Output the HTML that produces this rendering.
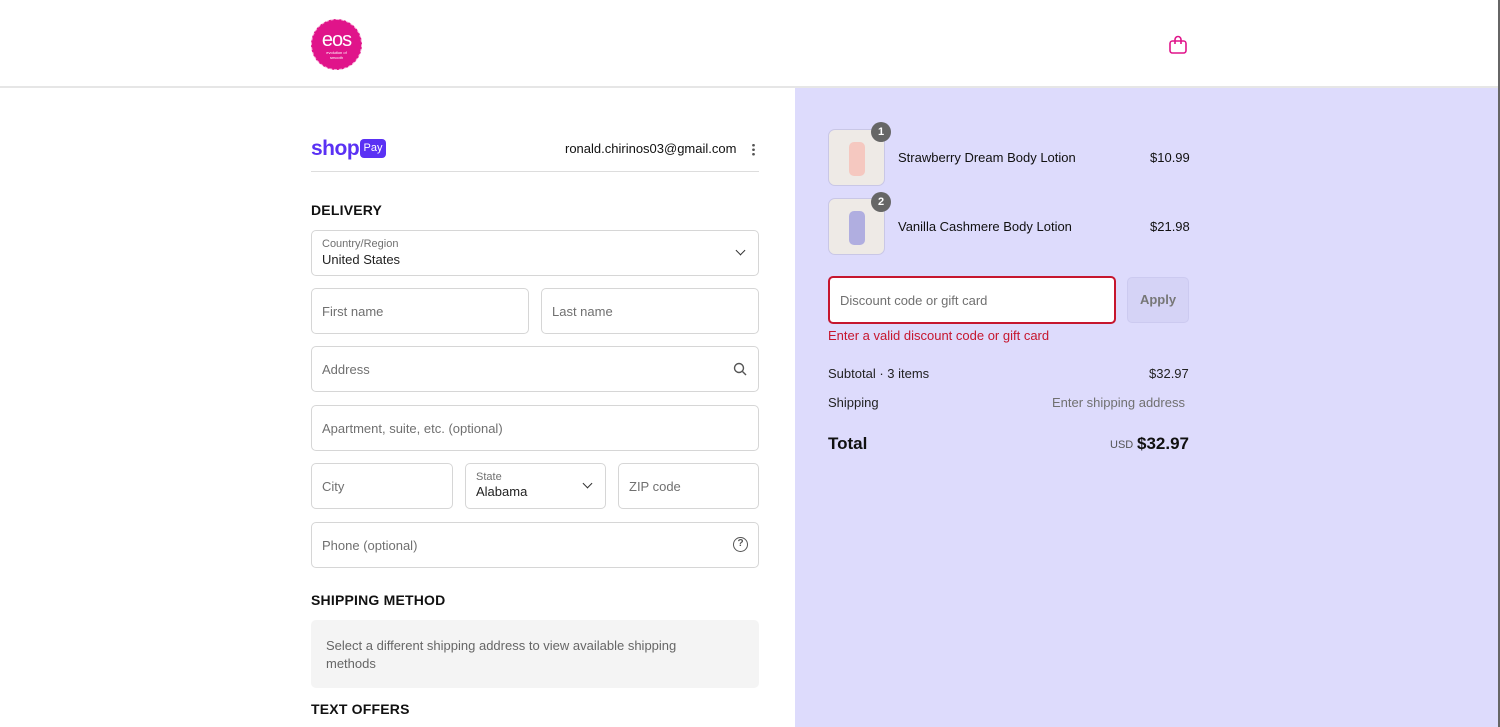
<!DOCTYPE html>
<html><head><style>
*{box-sizing:border-box;margin:0;padding:0}
body{width:1500px;height:727px;overflow:hidden;font-family:"Liberation Sans",sans-serif;color:#111;background:#fff;position:relative}
.hdr{position:absolute;left:0;top:0;width:1500px;height:88px;border-bottom:2px solid #e6e6e6;background:#fff}
.right{position:absolute;left:795px;top:88px;width:705px;height:639px;background:#dddbfc}
.a{position:absolute}
.f{position:absolute;border:1px solid #d6d6d6;border-radius:5px;background:#fff;font-size:13px;color:#707070;padding-left:10px;display:flex;align-items:center}
.lbl{font-size:11px;color:#707070}
.h{position:absolute;font-size:14px;font-weight:bold;letter-spacing:.2px}
.chev{position:absolute;width:7px;height:7px;border-right:1.5px solid #333;border-bottom:1.5px solid #333;transform:rotate(45deg)}
.t{font-size:13px;color:#222}
.thumb{position:absolute;width:57px;height:57px;border:1px solid #c9c7e6;border-radius:7px;background:#eeeae6}
.badge{position:absolute;width:20px;height:20px;border-radius:50%;background:#666;color:#fff;font-size:11px;font-weight:bold;text-align:center;line-height:20px}
</style></head><body>
<div class="hdr">
 <div class="a" style="left:311px;top:19px;width:51px;height:51px;border-radius:50%;background:#e0148a;color:#fff;text-align:center;border:1px dashed #f6a6d2">
  <div style="font-size:20px;line-height:20px;margin-top:10px;letter-spacing:-1px">eos</div>
  <div style="font-size:4px;line-height:5px">evolution of<br>smooth</div>
 </div>
 <svg class="a" style="left:1168px;top:34px" width="20" height="21" viewBox="0 0 20 21"><rect x="2" y="7" width="16" height="12" rx="2.5" fill="none" stroke="#e0148a" stroke-width="1.6"/><path d="M7 10V5.5a3 3 0 0 1 6 0V10" fill="none" stroke="#e0148a" stroke-width="1.6"/></svg>
</div>
<div class="right"></div>
<div class="a" style="left:1498px;top:0;width:2px;height:727px;background:#666"></div>

<div class="a" style="left:311px;top:137px;font-size:21px;font-weight:bold;color:#5a31f4;letter-spacing:-.5px">shop</div>
<div class="a" style="left:360px;top:139px;width:26px;height:19px;border-radius:4px;background:#5a31f4;color:#fff;font-size:11px;text-align:center;line-height:19px">Pay</div>
<div class="a t" style="left:565px;top:141px;color:#111">ronald.chirinos03@gmail.com</div>
<div class="a" style="left:752px;top:143px;width:3px;height:13px;background:radial-gradient(circle,#555 1.2px,transparent 1.5px) 0 0/3px 4.5px"></div>
<div class="a" style="left:311px;top:171px;width:448px;height:1px;background:#ddd"></div>

<div class="h" style="left:311px;top:202px">DELIVERY</div>
<div class="f" style="left:311px;top:230px;width:448px;height:46px;display:block;padding-top:7px"><div class="lbl">Country/Region</div><div class="t" style="margin-top:2px">United States</div></div>
<div class="chev" style="left:737px;top:247px"></div>
<div class="f" style="left:311px;top:288px;width:218px;height:46px">First name</div>
<div class="f" style="left:541px;top:288px;width:218px;height:46px">Last name</div>
<div class="f" style="left:311px;top:346px;width:448px;height:46px">Address</div>
<svg class="a" style="left:733px;top:362px" width="14" height="14" viewBox="0 0 14 14"><circle cx="6" cy="6" r="4.5" fill="none" stroke="#555" stroke-width="1.4"/><path d="M9.5 9.5L13 13" stroke="#555" stroke-width="1.4"/></svg>
<div class="f" style="left:311px;top:405px;width:448px;height:46px">Apartment, suite, etc. (optional)</div>
<div class="f" style="left:311px;top:463px;width:142px;height:46px">City</div>
<div class="f" style="left:465px;top:463px;width:141px;height:46px;display:block;padding-top:7px"><div class="lbl">State</div><div class="t" style="margin-top:1px">Alabama</div></div>
<div class="chev" style="left:584px;top:480px"></div>
<div class="f" style="left:618px;top:463px;width:141px;height:46px">ZIP code</div>
<div class="f" style="left:311px;top:522px;width:448px;height:46px">Phone (optional)</div>
<div class="a" style="left:733px;top:537px;width:15px;height:15px;border:1.4px solid #555;border-radius:50%;font-size:10px;text-align:center;line-height:12px;color:#555;font-weight:bold">?</div>

<div class="h" style="left:311px;top:592px">SHIPPING METHOD</div>
<div class="a" style="left:311px;top:620px;width:448px;height:68px;background:#f4f4f4;border-radius:5px;padding:17px 60px 17px 15px;font-size:13px;color:#666;line-height:18px">Select a different shipping address to view available shipping methods</div>
<div class="h" style="left:311px;top:701px">TEXT OFFERS</div>

<div class="thumb" style="left:828px;top:129px"><div style="margin:12px auto;width:16px;height:34px;border-radius:5px;background:#f5c8c0"></div></div>
<div class="badge" style="left:871px;top:122px">1</div>
<div class="a t" style="left:898px;top:150px;color:#111">Strawberry Dream Body Lotion</div>
<div class="a t" style="left:1150px;top:150px;color:#111">$10.99</div>
<div class="thumb" style="left:828px;top:198px"><div style="margin:12px auto;width:16px;height:34px;border-radius:5px;background:#b0aee0"></div></div>
<div class="badge" style="left:871px;top:192px">2</div>
<div class="a t" style="left:898px;top:219px;color:#111">Vanilla Cashmere Body Lotion</div>
<div class="a t" style="left:1150px;top:219px;color:#111">$21.98</div>

<div class="f" style="left:828px;top:276px;width:288px;height:48px;border:2px solid #c6162e;color:#707070">Discount code or gift card</div>
<div class="a" style="left:1127px;top:277px;width:62px;height:46px;border-radius:5px;background:#d5d3f6;border:1px solid #cccaf0;color:#777;font-size:13px;font-weight:bold;text-align:center;line-height:44px">Apply</div>
<div class="a" style="left:828px;top:328px;font-size:13px;color:#c6162e">Enter a valid discount code or gift card</div>
<div class="a t" style="left:828px;top:366px">Subtotal · 3 items</div>
<div class="a t" style="left:1149px;top:366px">$32.97</div>
<div class="a t" style="left:1052px;top:395px;color:#707070">Enter shipping address</div>
<div class="a t" style="left:828px;top:395px">Shipping</div>
<div class="a" style="left:828px;top:434px;font-size:17px;font-weight:bold">Total</div>
<div class="a" style="left:1110px;top:439px;font-size:11px;color:#555">USD</div>
<div class="a" style="left:1137px;top:434px;font-size:17px;font-weight:bold">$32.97</div>
</body></html>
